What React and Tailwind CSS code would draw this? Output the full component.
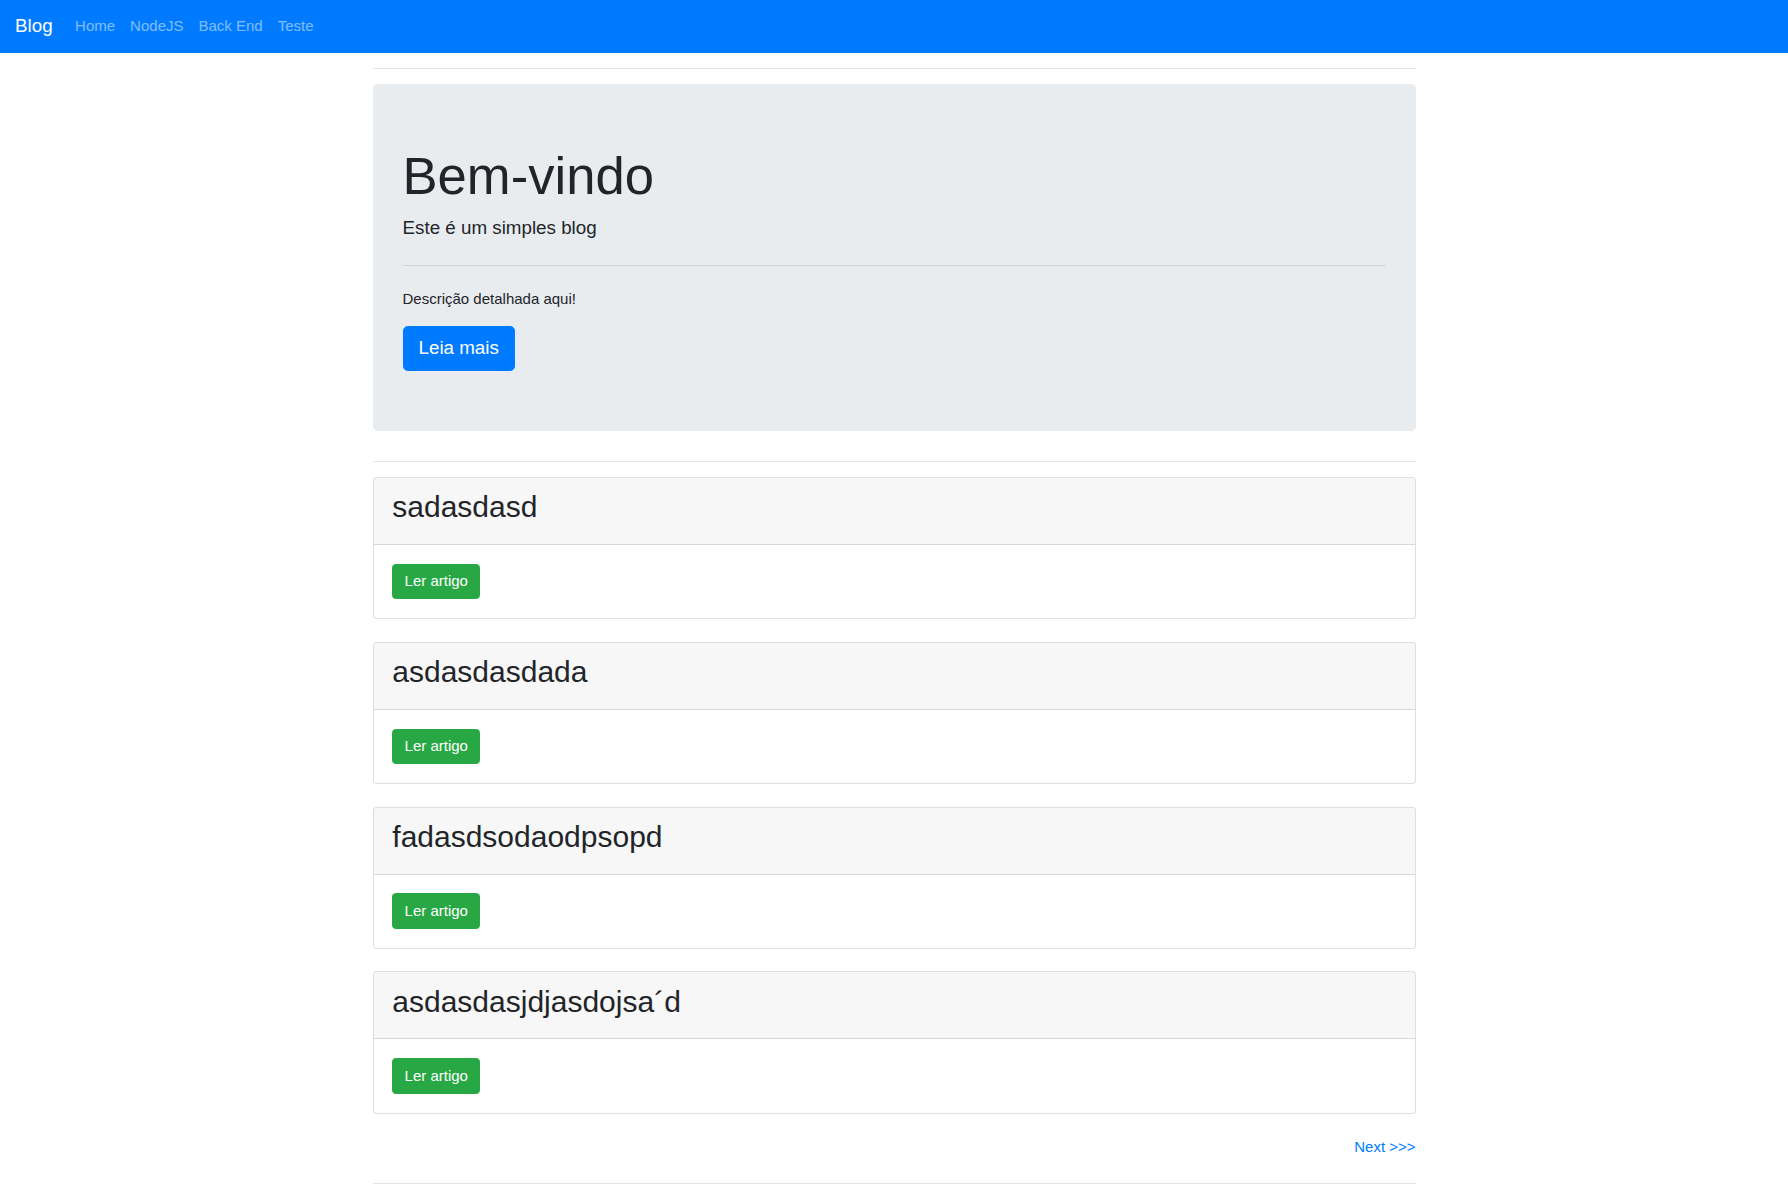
const posts = [
  "sadasdasd",
  "asdasdasdada",
  "fadasdsodaodpsopd",
  "asdasdasjdjasdojsa´d",
];

const navLinks = ["Home", "NodeJS", "Back End", "Teste"];

function PostCard({ title }) {
  return (
    <div className="mb-[22.5px] overflow-hidden rounded-[3.76px] border border-black/[0.125] bg-white">
      <div className="border-b border-black/[0.125] bg-black/[0.03] px-[18.8px] py-[11.25px]">
        <h2 className="mb-[7.5px] text-[30px] font-normal leading-[36px]">{title}</h2>
      </div>
      <div className="p-[18.8px]">
        <a
          href="#"
          className="inline-block rounded-[3.76px] border border-[#28a745] bg-[#28a745] px-[11.25px] py-[5.6px] text-[15px] leading-[22.5px] text-white"
        >
          Ler artigo
        </a>
      </div>
    </div>
  );
}

export default function App() {
  return (
    <div className="min-h-screen bg-white font-['Liberation_Sans',Arial,sans-serif] text-[15px] leading-[22.5px] text-[#212529]">
      {/* navbar */}
      <nav className="flex h-[52.6px] items-center bg-[#007bff] px-[15px]">
        <a href="#" className="mr-[15px] py-[4.7px] text-[18.8px] leading-[28.2px] text-white">
          Blog
        </a>
        <div className="flex">
          {navLinks.map((l) => (
            <a key={l} href="#" className="px-[7.5px] py-[7.5px] text-white/50">
              {l}
            </a>
          ))}
        </div>
      </nav>

      <div className="mx-auto w-[1043px]">
        <hr className="my-[15px] border-0 border-t border-black/10" />

        {/* jumbotron */}
        <div className="mb-[30px] rounded-[4.7px] bg-[#e9ecef] px-[30px] py-[60px]">
          <h1 className="mb-[7.5px] text-[52.6px] font-light leading-[63px]">Bem-vindo</h1>
          <p className="text-[18.8px] leading-[28.2px]">Este é um simples blog</p>
          <hr className="my-[22.5px] border-0 border-t border-black/10" />
          <p className="mb-[15px]">Descrição detalhada aqui!</p>
          <a
            href="#"
            className="inline-block rounded-[4.7px] border border-[#007bff] bg-[#007bff] px-[15px] py-[7.5px] text-[18.8px] leading-[28.2px] text-white"
          >
            Leia mais
          </a>
        </div>

        <hr className="mb-[15px] mt-0 border-0 border-t border-black/10" />

        {posts.map((p) => (
          <PostCard key={p} title={p} />
        ))}

        <div className="text-right">
          <a href="#" className="text-[#007bff]">
            Next &gt;&gt;&gt;
          </a>
        </div>

        <hr className="mb-[15px] mt-[24px] border-0 border-t border-black/10" />
      </div>
    </div>
  );
}
